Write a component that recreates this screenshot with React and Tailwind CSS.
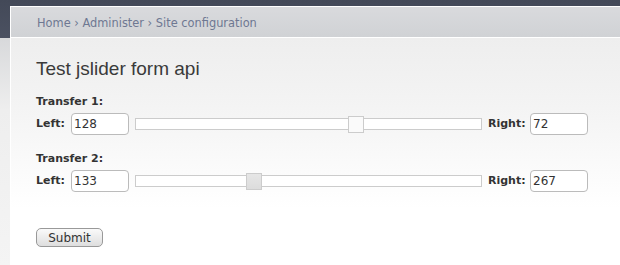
import React from 'react';

const dv = { fontFamily: '"DejaVu Sans", Verdana, sans-serif' };

const SliderRow = ({ left, right, pos, active }) => (
  <div className="flex items-center h-[22px]">
    <span className="text-[11px] font-bold text-[#333] w-[35px]">Left:</span>
    <input
      readOnly
      value={left}
      className="w-[58px] h-[22px] border border-[#bbb] rounded-[4px] bg-white px-[2px] text-[12px] text-[#333] outline-none"
      style={dv}
    />
    <div className="relative ml-[6px] w-[347px] h-[12px] border border-[#ccc] bg-white">
      <div
        className={`absolute top-[-3px] w-[16px] h-[17px] border ${active ? 'border-[#ccc] bg-[linear-gradient(to_bottom,#e6e6e6,#dcdcdc)]' : 'border-[#ccc] bg-[#fafafa]'}`}
        style={{ left: pos }}
      />
    </div>
    <span className="ml-[6px] text-[11px] font-bold text-[#333] w-[42px]">Right:</span>
    <input
      readOnly
      value={right}
      className="w-[58px] h-[22px] border border-[#bbb] rounded-[4px] bg-white px-[2px] text-[12px] text-[#333] outline-none"
      style={dv}
    />
  </div>
);

export default function App() {
  return (
    <div
      className="w-[620px] h-[265px] overflow-hidden bg-[linear-gradient(to_bottom,#434958_0px,#4b5161_38px,#d8d9db_38px,#eeeeee_110px,#f4f4f4_265px)] pt-[6px] pl-[10px]"
      style={dv}
    >
      <div className="h-full border-l border-t border-white flex flex-col">
        <div className="h-[31px] bg-[linear-gradient(to_bottom,#d9dadd,#d0d2d5)] border-b border-white flex items-center pl-[26px] pt-[3px]">
          <span className="text-[11.4px] text-[#6e7892]">Home › Administer › Site configuration</span>
        </div>
        <div className="flex-1 bg-[linear-gradient(to_bottom,#eeeeee,#f4f4f4_70px,#ffffff_170px)] pl-[25px]">
          <h1
            className="mt-[20px] text-[19px] leading-[22px] text-[#3a3a3a]"
            style={{ fontFamily: '"Liberation Sans", Arial, sans-serif' }}
          >
            Test jslider form api
          </h1>
          <div className="mt-[15px]">
            <div className="text-[11px] font-bold text-[#333] leading-[14px] mb-[4px]">Transfer 1:</div>
            <SliderRow left="128" right="72" pos={212} />
          </div>
          <div className="mt-[17px]">
            <div className="text-[11px] font-bold text-[#333] leading-[14px] mb-[4px]">Transfer 2:</div>
            <SliderRow left="133" right="267" pos={110} active />
          </div>
          <button className="mt-[36px] w-[67px] h-[19px] border border-[#999] rounded-[5px] bg-[linear-gradient(to_bottom,#fafafa,#dedede)] text-[12px] leading-[16px] text-[#333]">
            Submit
          </button>
        </div>
      </div>
    </div>
  );
}
